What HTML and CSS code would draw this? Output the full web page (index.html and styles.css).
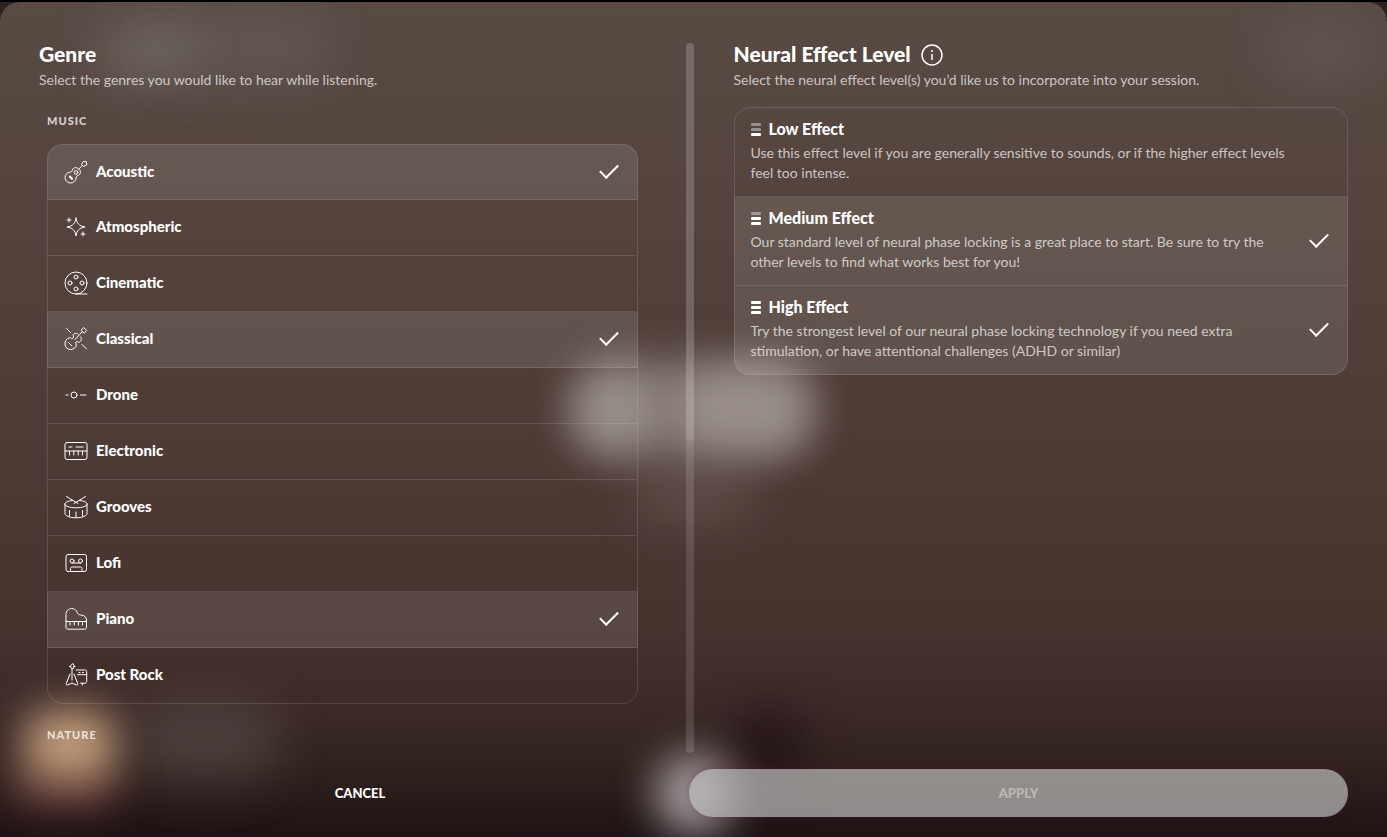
FILE: index.html
```
<!DOCTYPE html>
<html lang="en">
  <head>
    <meta charset="UTF-8" />
    <meta name="viewport" content="width=device-width, initial-scale=1.0" />
    <title>Session Filters</title>
    <link rel="stylesheet" href="styles.css">
  </head>
  <body>
    <div class="sheet">
      <!-- Blurred player showing through the sheet -->
      <div class="backdrop" aria-hidden="true">
        <div class="glow glow-nav"></div>
        <div class="glow glow-nav-soft"></div>
        <div class="glow glow-profile"></div>
        <div class="glow glow-timer"></div>
        <div class="glow glow-timer-left"></div>
        <div class="glow glow-timer-right"></div>
        <div class="glow glow-caption"></div>
        <div class="glow glow-cover-base"></div>
        <div class="glow glow-cover"></div>
        <div class="glow glow-track"></div>
        <div class="glow glow-shade"></div>
        <div class="glow glow-play"></div>
      </div>

      <main class="columns">
        <!-- Section: Genre -->
        <section class="genre">
          <div class="genre-scroll">
            <h2>Genre</h2>
            <p class="intro">Select the genres you would like to hear while listening.</p>

            <div class="group">
              <h3>Music</h3>
              <ul class="options">
                <li>
                  <label class="option">
                    <svg class="icon" viewBox="0 0 24 24">
                      <path d="M14.500 9c-1.500-2.200-5.300-1.800-6 .9-.3 1.400-1 1.900-2.600 2.200C3 12.600 1 14.800 1 17.500 1 20.600 3.500 23 6.500 23c3.100 0 5.400-2.200 5.700-5.200.1-1.300.5-2 1.700-2.400 2.500-.8 3.300-3.400 1.900-5.400" />
                      <path d="m14.500 9.500 3.800-4M18 3.500l1.500-2.200 1.500.5 1.500-.3-.2 1.500.7 1.500-2.200 1.500-1.500.3-1.300-1.300z" />
                      <circle cx="12" cy="12.500" r="1.800" />
                      <path d="m5.800 16.500 2.200 2.200" stroke-width="2" />
                    </svg>
                    <span>Acoustic</span>
                    <input type="checkbox" checked />
                  </label>
                </li>
                <li>
                  <label class="option">
                    <svg class="icon" viewBox="0 0 24 24">
                      <path d="M12 3c.8 5.500 3 8 9 9-6 1-8.200 3.500-9 9-.8-5.500-3-8-9-9 6-1 8.200-3.500 9-9z" />
                      <path d="M5 3v4M3 5h4M19 17v4M17 19h4" />
                    </svg>
                    <span>Atmospheric</span>
                    <input type="checkbox" />
                  </label>
                </li>
                <li>
                  <label class="option">
                    <svg class="icon" viewBox="0 0 24 24">
                      <circle cx="12" cy="12" r="11" />
                      <circle cx="12" cy="6" r="2" />
                      <circle cx="12" cy="18" r="2" />
                      <circle cx="6" cy="12" r="2" />
                      <circle cx="18" cy="12" r="2" />
                      <path d="M12 23h11" />
                    </svg>
                    <span>Cinematic</span>
                    <input type="checkbox" />
                  </label>
                </li>
                <li>
                  <label class="option">
                    <svg class="icon" viewBox="0 0 24 24">
                      <path d="M14 7c-2-1.500-5-.5-5 1.900 1.300 1.300.3 3-1.500 2.600-.5-.8-1.500-1-2.500-.6C2 12 1 14.300 1 17c0 3.200 2.500 5.500 5.500 5.500 3.200 0 5.800-2 5.800-4.500 0-1-.8-1.500-.5-2.500.5-1.400 2-1.200 2.500-.2 2.500 0 3.900-2.800 2.500-5.300" />
                      <path d="m11 12.500 7-7.500M4.500 15.500l3.500 3.500" />
                      <path d="m20 .8 2.700 2.700-2.700 2.800-2.700-2.800zM2.500 1.500l4 4M18 17.500l4.500 4.500" />
                    </svg>
                    <span>Classical</span>
                    <input type="checkbox" checked />
                  </label>
                </li>
                <li>
                  <label class="option">
                    <svg class="icon" viewBox="0 0 24 24">
                      <circle cx="10" cy="12" r="3" />
                      <path d="M2 12h2M16.500 12h5.500" />
                    </svg>
                    <span>Drone</span>
                    <input type="checkbox" />
                  </label>
                </li>
                <li>
                  <label class="option">
                    <svg class="icon" viewBox="0 0 24 24">
                      <rect x="1" y="3.500" width="22" height="17" rx="2" />
                      <path d="M1 12h22M5 8h3M12 8h7M5.500 12v4M9.800 12v4M14.200 12v4M18.500 12v4" />
                    </svg>
                    <span>Electronic</span>
                    <input type="checkbox" />
                  </label>
                </li>
                <li>
                  <label class="option">
                    <svg class="icon" viewBox="0 0 24 24">
                      <path d="M8.500 5.500C4 6 1 7.300 1 9c0 2.200 5 3.800 11 3.800S23 11.200 23 9c0-1.700-3-3-7.500-3.500M1 9v9.500c0 2.400 5 4.300 11 4.300s11-1.900 11-4.300V9" />
                      <path d="M2.500 1.500 14 8.500M21.500 1.500 10 8.500M5.500 15.500v5.500M12 17v5.500M18.500 15.500v5.500" />
                    </svg>
                    <span>Grooves</span>
                    <input type="checkbox" />
                  </label>
                </li>
                <li>
                  <label class="option">
                    <svg class="icon" viewBox="0 0 24 24">
                      <rect x="2" y="3.500" width="20.500" height="17" rx="2" />
                      <circle cx="8" cy="10" r="2" />
                      <circle cx="16.500" cy="10" r="2" />
                      <path d="M8 12h8.500M6.500 20v-2.500c0-1 .6-1.500 1.500-1.500h8.500c.9 0 1.500.5 1.500 1.500V20" />
                    </svg>
                    <span>Lofi</span>
                    <input type="checkbox" />
                  </label>
                </li>
                <li>
                  <label class="option">
                    <svg class="icon" viewBox="0 0 24 24">
                      <path d="M2 14.500V7.500C2 4 4.500 1.500 7.700 1.500c3 0 4.600 1.700 5.500 3.800.7 1.700 1.500 2.600 3.500 2.700 3.500.2 5.800 2 5.800 5v7.500c0 1-.6 1.700-1.700 1.700H3.700c-1.100 0-1.700-.7-1.700-1.700z" />
                      <path d="M2 14.500h20.500M6 14.500V18M10.200 14.500V18M14.400 14.500V18M18.500 14.500V18" />
                    </svg>
                    <span>Piano</span>
                    <input type="checkbox" checked />
                  </label>
                </li>
                <li>
                  <label class="option">
                    <svg class="icon" viewBox="0 0 24 24">
                      <path d="m8.500.8-2 2.200 1 2.700h1.800l.7-2.900zM8 5.700V17M6 11 2.300 20.500c-.3 1 .2 1.800 1.300 1.500l4.400-2 4.400 2c1.100.3 1.600-.5 1.300-1.500L10 11" />
                      <path d="M12 7h9c1 0 1.700.6 1.700 1.700V18.500c0 1-.7 1.700-1.700 1.700h-4.500M13.500 11.700h9.200M15 9.500h1M18.500 9.500h1M18.500 20.500v1.500" />
                      <path d="M5.500 3.500h1M10 3.500h1" />
                    </svg>
                    <span>Post Rock</span>
                    <input type="checkbox" />
                  </label>
                </li>
              </ul>
            </div>

            <div class="group">
              <h3>Nature</h3>
            </div>
          </div>
          <div class="scrollbar" aria-hidden="true">
            <div class="scrollbar-thumb"></div>
          </div>
        </section>

        <!-- Section: Neural Effect Level -->
        <section class="effect">
          <div class="effect-title">
            <h2>Neural Effect Level</h2>
            <button type="button" class="info" aria-label="About neural effect levels">
              <svg viewBox="0 0 24 24">
                <circle cx="12" cy="12" r="10" />
                <path d="M12 11v6M12 7v2" />
              </svg>
            </button>
          </div>
          <p class="intro">Select the neural effect level(s) you’d like us to incorporate into your session.</p>

          <ul class="options">
            <li>
              <label class="option level">
                <span class="level-text">
                  <span class="level-name">
                    <svg class="bars" viewBox="0 0 10 13">
                      <rect class="off" y="0" width="10" height="3" rx="1" />
                      <rect class="off" y="5" width="10" height="3" rx="1" />
                      <rect y="10" width="10" height="3" rx="1" />
                    </svg>
                    Low Effect
                  </span>
                  <span class="level-desc">Use this effect level if you are generally sensitive to sounds, or if the higher effect levels feel too intense.</span>
                </span>
                <input type="checkbox" />
              </label>
            </li>
            <li>
              <label class="option level">
                <span class="level-text">
                  <span class="level-name">
                    <svg class="bars" viewBox="0 0 10 13">
                      <rect class="off" y="0" width="10" height="3" rx="1" />
                      <rect y="5" width="10" height="3" rx="1" />
                      <rect y="10" width="10" height="3" rx="1" />
                    </svg>
                    Medium Effect
                  </span>
                  <span class="level-desc">Our standard level of neural phase locking is a great place to start. Be sure to try the other levels to find what works best for you!</span>
                </span>
                <input type="checkbox" checked />
              </label>
            </li>
            <li>
              <label class="option level">
                <span class="level-text">
                  <span class="level-name">
                    <svg class="bars" viewBox="0 0 10 13">
                      <rect y="0" width="10" height="3" rx="1" />
                      <rect y="5" width="10" height="3" rx="1" />
                      <rect y="10" width="10" height="3" rx="1" />
                    </svg>
                    High Effect
                  </span>
                  <span class="level-desc">Try the strongest level of our neural phase locking technology if you need extra stimulation, or have attentional challenges (ADHD or similar)</span>
                </span>
                <input type="checkbox" checked />
              </label>
            </li>
          </ul>
        </section>
      </main>

      <footer class="actions">
        <button type="button" class="cancel">Cancel</button>
        <button type="button" class="apply" disabled>Apply</button>
      </footer>
    </div>
  </body>
</html>
```
FILE: styles.css
```
* {
  box-sizing: border-box;
}
body {
  margin: 0;
  padding-top: 2px;
  background: linear-gradient(#000 2px, #2e2120 2px);
  color: #fff;
  font-family: Lato, sans-serif;
  font-size: 14px;
  line-height: 20px;
}
h2,
h3,
p,
ul {
  margin: 0;
  padding: 0;
}
ul {
  list-style: none;
}
button {
  border: none;
  font-family: inherit;
  cursor: pointer;
}

/* Sheet */
.sheet {
  position: relative;
  display: flex;
  flex-direction: column;
  height: calc(100vh - 2px);
  padding: 39px 39px 20px;
  border-radius: 20px 20px 0 0;
  overflow: hidden;
  background: linear-gradient(#594a44, #54443d 25%, #4e3c36 50%, #46332e 75%, #3b2a28 85%, #32231f 91%, #1e1214);
}
.backdrop {
  position: absolute;
  inset: 0;
}
.glow {
  position: absolute;
  border-radius: 40px;
  filter: blur(24px);
}
.glow-nav {
  top: 20px;
  left: 100px;
  width: 90px;
  height: 60px;
  background: rgba(140, 140, 132, 0.4);
}
.glow-nav-soft {
  top: 10px;
  left: 160px;
  width: 170px;
  height: 70px;
  background: rgba(140, 140, 140, 0.2);
}
.glow-profile {
  top: 20px;
  right: 10px;
  width: 110px;
  height: 60px;
  background: rgba(140, 130, 130, 0.2);
}
.glow-timer {
  top: 358px;
  left: calc(50% - 120px);
  width: 240px;
  height: 96px;
  background: rgba(180, 172, 168, 0.5);
  filter: blur(20px);
}
.glow-timer-left {
  top: 368px;
  left: calc(50% - 125px);
  width: 85px;
  height: 86px;
  background: rgba(190, 184, 180, 0.4);
  filter: blur(20px);
}
.glow-timer-right {
  top: 364px;
  left: calc(50% - 15px);
  width: 130px;
  height: 90px;
  background: rgba(190, 182, 178, 0.4);
  filter: blur(20px);
}
.glow-caption {
  top: 460px;
  left: calc(50% - 60px);
  width: 120px;
  height: 60px;
  background: rgba(140, 125, 120, 0.3);
}
.glow-cover {
  top: 708px;
  left: 24px;
  width: 92px;
  height: 68px;
  border-radius: 24px;
  background: #c29d7c;
  filter: blur(20px);
}
.glow-cover-base {
  top: 758px;
  left: 10px;
  width: 110px;
  height: 46px;
  background: rgba(140, 85, 80, 0.6);
  filter: blur(20px);
}
.glow-track {
  top: 700px;
  left: 130px;
  width: 150px;
  height: 80px;
  background: rgba(120, 112, 112, 0.32);
}
.glow-shade {
  top: 706px;
  left: calc(50% + 35px);
  width: 80px;
  height: 76px;
  background: rgba(30, 12, 20, 0.6);
  filter: blur(22px);
}
.glow-play {
  top: 752px;
  left: calc(50% - 40px);
  width: 80px;
  height: 80px;
  background: #a39a9c;
  filter: blur(20px);
}

/* Columns */
.columns {
  position: relative;
  display: grid;
  grid-template-columns: 1fr 1fr;
  flex: 1;
  min-height: 0;
}
.genre {
  display: flex;
  min-height: 0;
}
.genre-scroll {
  flex: 1;
  padding-right: 40px;
  overflow-y: auto;
  scrollbar-width: none;
}
.scrollbar {
  width: 8px;
  margin-top: 2px;
  border-radius: 4px;
  background: rgba(255, 255, 255, 0.13);
}
.scrollbar-thumb {
  height: 56%;
  border-radius: 4px;
  background: rgba(255, 255, 255, 0.08);
}
.effect {
  padding-left: 40px;
}
h2 {
  font-size: 21px;
  font-weight: 900;
  line-height: 26px;
}
.intro {
  margin-top: 3px;
  color: rgba(255, 255, 255, 0.7);
}
.group {
  padding: 21px 8px 0;
}
h3 {
  margin-bottom: 13px;
  color: rgba(255, 255, 255, 0.75);
  font-size: 11px;
  font-weight: 900;
  letter-spacing: 1px;
  text-transform: uppercase;
}
.effect-title {
  display: flex;
  align-items: flex-end;
  gap: 9px;
}
.info {
  display: flex;
  width: 24px;
  height: 24px;
  padding: 0;
  background: none;
}
.info svg {
  fill: none;
  stroke: #fff;
  stroke-width: 1.5;
}

/* Option lists */
.options li {
  border: 1px solid rgba(255, 255, 255, 0.12);
}
.options li + li {
  border-top: none;
}
.options li:first-child {
  border-radius: 16px 16px 0 0;
}
.options li:last-child {
  border-radius: 0 0 16px 16px;
}
.options li:has(input:checked) {
  background: rgba(255, 255, 255, 0.1);
}
.option {
  display: flex;
  align-items: center;
  gap: 8px;
  height: 55px;
  padding: 0 16px 3px;
  font-size: 15px;
  font-weight: 900;
  cursor: pointer;
}
.options li:first-child .option:not(.level) {
  height: 54px;
}
.icon {
  width: 24px;
  height: 24px;
  margin-top: 2px;
  fill: none;
  stroke: #fff;
  stroke-linecap: round;
  stroke-linejoin: round;
}
.option input {
  appearance: none;
  width: 24px;
  height: 24px;
  margin: 0 0 0 auto;
  padding: 5px 0 0 3px;
  flex-shrink: 0;
  cursor: pointer;
}
.option input:checked::before {
  content: "";
  display: block;
  width: 16px;
  height: 8px;
  border: solid #fff;
  border-width: 0 0 2px 2px;
  transform: rotate(-45deg);
}

/* Effect levels */
.effect .options {
  margin-top: 17px;
}
.level {
  height: auto;
  padding: 11px 16px 13px;
}
.level-name {
  display: flex;
  align-items: center;
  gap: 8px;
  font-size: 16px;
}
.bars {
  width: 10px;
  height: 13px;
  fill: #fff;
}
.off {
  opacity: 0.4;
}
.level-desc {
  display: block;
  margin-top: 4px;
  color: rgba(255, 255, 255, 0.7);
  font-size: 14px;
  font-weight: 400;
}

/* Footer */
.actions {
  position: relative;
  display: flex;
  gap: 8px;
  margin-top: 16px;
}
.actions button {
  height: 48px;
  border-radius: 24px;
  font-size: 13px;
  font-weight: 900;
  text-transform: uppercase;
}
.cancel {
  flex: 1;
  background: none;
  color: #fff;
}
.apply {
  width: 659px;
  background: rgba(190, 190, 188, 0.7);
  box-shadow: 0 0 8px rgba(90, 20, 60, 0.4);
  color: rgba(255, 255, 255, 0.4);
}
```
